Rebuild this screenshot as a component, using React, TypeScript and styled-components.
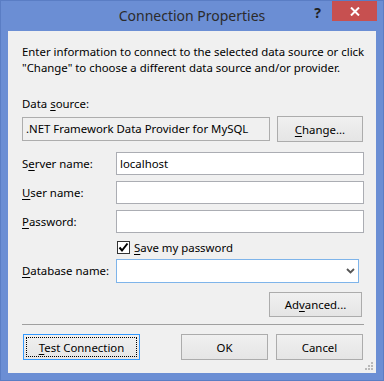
import React from "react"
import styled, { createGlobalStyle } from "styled-components"

const GlobalStyle = createGlobalStyle`
	html, body {
		margin: 0;
		padding: 0;
		background: #6b8ed4;
	}
	* {
		box-sizing: border-box;
	}
`

const Window = styled.div`
	width: 384px;
	height: 381px;
	background: #6b8ed4;
	border: 1px solid #5a7dc4;
	display: flex;
	flex-direction: column;
	font-family: "Noto Sans", "Open Sans", sans-serif;
	font-size: 11.4px;
	color: #000;
`

const TitleBar = styled.div`
	height: 30px;
	display: grid;
	grid-template-columns: 1fr auto 1fr;
	align-items: start;
`

const Title = styled.div`
	grid-column: 2;
	font-size: 14px;
	line-height: 30px;
	color: #2b2b2b;
`

const Controls = styled.div`
	grid-column: 3;
	justify-self: end;
	display: flex;
	margin-right: 6px;
`

const HelpButton = styled.div`
	width: 29px;
	height: 22px;
	display: flex;
	align-items: center;
	justify-content: center;
	font-weight: bold;
	font-size: 14px;
	color: #222;
`

const CloseButton = styled.div`
	width: 45px;
	height: 20px;
	background: #c75050;
	display: flex;
	align-items: center;
	justify-content: center;
`

const Panel = styled.div`
	position: relative;
	margin: 0 7px;
	height: 342px;
	background: #f0f0f0;
	padding: 13px 12px 0 14px;
	display: flex;
	flex-direction: column;
`

const Description = styled.p`
	margin: 0;
	line-height: 16px;
	white-space: nowrap;
`

const Label = styled.label<{ $gap?: number }>`
	display: block;
	line-height: 16px;
	white-space: nowrap;
	margin-top: ${p => p.$gap ?? 0}px;
`

const Row = styled.div<{ $gap: number; $height: number }>`
	display: flex;
	align-items: center;
	justify-content: space-between;
	margin-top: ${p => p.$gap}px;
	height: ${p => p.$height}px;
`

const ReadOnlyBox = styled.div`
	width: 248px;
	height: 24px;
	border: 1px solid #adadad;
	background: #f0f0f0;
	padding-left: 3px;
	line-height: 22px;
	white-space: nowrap;
`

const TextBox = styled.div<{ $width?: number; $focused?: boolean }>`
	width: ${p => p.$width ?? 248}px;
	height: 100%;
	border: 1px solid ${p => (p.$focused ? "#7eb4ea" : "#abadb3")};
	background: #fff;
	padding: 0 3px;
	display: flex;
	align-items: center;
	justify-content: space-between;
`

const Button = styled.div<{ $width: number; $height?: number; $default?: boolean }>`
	position: relative;
	width: ${p => p.$width}px;
	height: ${p => p.$height ?? 25}px;
	border: 1px solid ${p => (p.$default ? "#3399ff" : "#acacac")};
	background: linear-gradient(#f0f0f0, #e5e5e5);
	display: flex;
	align-items: center;
	justify-content: center;
	white-space: nowrap;

	${p =>
		p.$default &&
		`
		&::after {
			content: "";
			position: absolute;
			inset: 2px;
			border: 1px dotted #000;
		}
	`}
`

const CheckRow = styled.div`
	display: flex;
	align-items: center;
	margin-top: 8px;
	padding-left: 95px;
	height: 13px;
	gap: 4px;
`

const CheckBox = styled.div`
	width: 13px;
	height: 13px;
	border: 1px solid #333;
	background: #fff;
	display: flex;
	align-items: center;
	justify-content: center;
`

const Separator = styled.div`
	margin-top: 7px;
	height: 1px;
	background: #a0a0a0;
`

const ButtonRow = styled.div`
	display: flex;
	margin-top: 9px;
	gap: 8px;
	padding: 0 1px;
`

const Spacer = styled.div`
	flex: 1;
`

const Grip = styled.svg`
	position: absolute;
	right: 2px;
	bottom: 2px;
`

const Key = styled.u`
	text-decoration-thickness: 1px;
	text-underline-offset: 2px;
`

const App = () => {
	return (
		<>
			<GlobalStyle />
			<Window>
				<TitleBar>
					<Title>Connection Properties</Title>
					<Controls>
						<HelpButton>?</HelpButton>
						<CloseButton>
							<svg width="10" height="9" viewBox="0 0 10 9">
								<path d="M1 0.5 L9 8.5 M9 0.5 L1 8.5" stroke="#fff" strokeWidth="2" />
							</svg>
						</CloseButton>
					</Controls>
				</TitleBar>
				<Panel>
					<Description>
						Enter information to connect to the selected data source or click
						<br />
						"Change" to choose a different data source and/or provider.
					</Description>

					<Label $gap={20}>
						Data <Key>s</Key>ource:
					</Label>
					<Row $gap={4} $height={26}>
						<ReadOnlyBox>.NET Framework Data Provider for MySQL</ReadOnlyBox>
						<Button $width={86} $height={26} style={{ marginRight: 1 }}>
							<span>
								<Key>C</Key>hange...
							</span>
						</Button>
					</Row>

					<Row $gap={10} $height={23}>
						<Label>
							S<Key>e</Key>rver name:
						</Label>
						<TextBox>localhost</TextBox>
					</Row>
					<Row $gap={6} $height={23}>
						<Label>
							<Key>U</Key>ser name:
						</Label>
						<TextBox />
					</Row>
					<Row $gap={6} $height={23}>
						<Label>
							<Key>P</Key>assword:
						</Label>
						<TextBox />
					</Row>

					<CheckRow>
						<CheckBox>
							<svg width="11" height="11" viewBox="0 0 11 11">
								<path d="M1.5 5.5 L4 8.5 L9.5 1.5" stroke="#000" strokeWidth="2" fill="none" />
							</svg>
						</CheckBox>
						<span>
							<Key>S</Key>ave my password
						</span>
					</CheckRow>

					<Row $gap={5} $height={24}>
						<Label>
							<Key>D</Key>atabase name:
						</Label>
						<TextBox $width={243} $focused style={{ marginRight: 5 }}>
							<span />
							<svg width="9" height="6" viewBox="0 0 9 6">
								<path d="M1 1 L4.5 4.5 L8 1" stroke="#555" strokeWidth="1.8" fill="none" />
							</svg>
						</TextBox>
					</Row>

					<Row $gap={9} $height={25}>
						<Spacer />
						<Button $width={93} style={{ marginRight: 2 }}>
							<span>
								Ad<Key>v</Key>anced...
							</span>
						</Button>
					</Row>

					<Separator />

					<ButtonRow>
						<Button $width={117} $height={26} $default>
							<span>
								<Key>T</Key>est Connection
							</span>
						</Button>
						<Spacer />
						<Button $width={87} $height={26}>OK</Button>
						<Button $width={87} $height={26}>Cancel</Button>
					</ButtonRow>

					<Grip width="9" height="9" viewBox="0 0 9 9">
						<g fill="#b9b9b9">
							<rect x="6" y="0" width="2" height="2" />
							<rect x="3" y="3" width="2" height="2" />
							<rect x="6" y="3" width="2" height="2" />
							<rect x="0" y="6" width="2" height="2" />
							<rect x="3" y="6" width="2" height="2" />
							<rect x="6" y="6" width="2" height="2" />
						</g>
					</Grip>
				</Panel>
			</Window>
		</>
	)
}

export default App
